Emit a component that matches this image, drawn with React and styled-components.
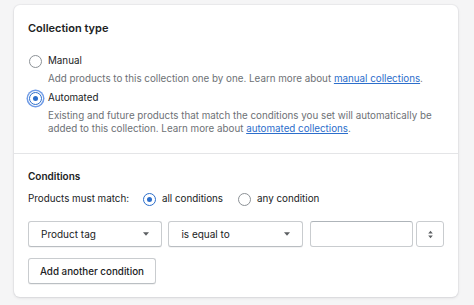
import React from "react";
import styled, { createGlobalStyle } from "styled-components";

const Global = createGlobalStyle`
  html, body { margin: 0; padding: 0; background: #f5f5f6; }
  body { font-family: Inter, "Noto Sans", sans-serif; color: #202223; }
`;

const Page = styled.div`
  width: 474px;
  height: 305px;
  box-sizing: border-box;
  padding: 5px 16px 0 14px;
`;

const Card = styled.div`
  background: #fff;
  border-radius: 6px;
  box-shadow: 0 0 0 1px rgba(63, 63, 68, 0.04), 0 1px 3px 0 rgba(63, 63, 68, 0.14);
  overflow: hidden;
`;

const Section = styled.div`
  padding: ${(p) => p.$pad};
  & + & { border-top: 1px solid #e4e5e7; }
`;

const Heading = styled.h2`
  margin: 0;
  font-size: 11px;
  font-weight: 600;
  line-height: 16px;
`;

const SubHeading = styled.h3`
  margin: 0;
  font-size: 10px;
  font-weight: 600;
  line-height: 16px;
`;

const ChoiceList = styled.div`
  display: flex;
  flex-direction: column;
  gap: 5px;
  margin-top: 17px;
`;

const Choice = styled.label`
  display: flex;
  align-items: center;
  gap: 6px;
  font-size: 9.8px;
  line-height: 16px;
  color: #202223;
`;

const RadioOuter = styled.span`
  box-sizing: border-box;
  width: 13px;
  height: 13px;
  margin-left: 1px;
  border-radius: 50%;
  border: ${(p) => (p.$on ? "1.5px solid #2c6ecb" : "1.2px solid #8c9196")};
  display: inline-flex;
  align-items: center;
  justify-content: center;
  flex: none;
  background: #fff;
  box-shadow: ${(p) => (p.$focus ? "0 0 0 1px #fff, 0 0 0 2.5px #6f9be6" : "none")};
  &::after {
    content: "";
    width: 5px;
    height: 5px;
    border-radius: 50%;
    background: ${(p) => (p.$on ? "#2c6ecb" : "transparent")};
  }
`;

const Help = styled.p`
  margin: 3px 0 0 20px;
  font-size: 9.8px;
  line-height: 13px;
  color: #6d7175;
`;

const Link = styled.a`
  color: #2c6ecb;
  text-decoration: underline;
`;

const MatchRow = styled.div`
  display: flex;
  align-items: center;
  gap: 13px;
  margin-top: 7px;
  font-size: 9.8px;
  line-height: 16px;
  color: #202223;
`;

const Inline = styled.div`
  display: flex;
  align-items: center;
  gap: 14px;
`;

const FieldRow = styled.div`
  display: flex;
  align-items: center;
  gap: 6px;
  margin-top: 14px;
`;

const Select = styled.div`
  box-sizing: border-box;
  width: ${(p) => p.$w}px;
  height: 26px;
  border: 1px solid #c9cccf;
  border-bottom-color: #b9bdc1;
  border-radius: 3px;
  display: flex;
  align-items: center;
  justify-content: space-between;
  padding: 0 12px 0 12px;
  font-size: 10px;
  color: #202223;
  background: #fff;
  box-shadow: 0 1px 0 rgba(22, 29, 37, 0.05);
`;

const Input = styled.div`
  box-sizing: border-box;
  width: ${(p) => p.$w}px;
  height: 26px;
  margin-left: 1px;
  border: 1px solid #c9cccf;
  border-top-color: #aeb4b9;
  border-radius: 3px;
  background: #fff;
`;

const Spinner = styled.div`
  box-sizing: border-box;
  width: 28px;
  height: 26px;
  border: 1px solid #c9cccf;
  border-radius: 3px;
  display: flex;
  align-items: center;
  justify-content: center;
  background: #fff;
  margin-left: -3px;
`;

const Button = styled.button`
  box-sizing: border-box;
  display: block;
  height: 26px;
  margin-top: 11px;
  padding: 0 11px;
  border: 1px solid #c9cccf;
  border-bottom-color: #babfc3;
  border-radius: 3px;
  background: #fff;
  font-family: inherit;
  font-size: 9.8px;
  font-weight: 500;
  color: #202223;
  box-shadow: 0 1px 0 rgba(0, 0, 0, 0.05);
`;

const Caret = () => (
  <svg width="6" height="4" viewBox="0 0 6 4">
    <path d="M0 0.3h6L3 3.7z" fill="#5c5f62" />
  </svg>
);

const UpDown = () => (
  <svg width="5" height="9" viewBox="0 0 5 9">
    <path d="M0.2 3.6L2.5 0.8l2.3 2.8z M0.2 5.4L2.5 8.2l2.3-2.8z" fill="#5c5f62" />
  </svg>
);

export default function App() {
  return (
    <>
      <Global />
      <Page>
        <Card>
          <Section $pad="15px 14px 18px 14px">
            <Heading>Collection type</Heading>
            <ChoiceList>
              <div>
                <Choice>
                  <RadioOuter />
                  Manual
                </Choice>
                <Help>
                  Add products to this collection one by one. Learn more about{" "}
                  <Link>manual collections</Link>.
                </Help>
              </div>
              <div>
                <Choice>
                  <RadioOuter $on $focus />
                  Automated
                </Choice>
                <Help>
                  Existing and future products that match the conditions you set will automatically be
                  <br />
                  added to this collection. Learn more about <Link>automated collections</Link>.
                </Help>
              </div>
            </ChoiceList>
          </Section>
          <Section $pad="14px 14px 13px 14px">
            <SubHeading>Conditions</SubHeading>
            <MatchRow>
              <span>Products must match:</span>
              <Inline>
                <Choice>
                  <RadioOuter $on />
                  all conditions
                </Choice>
                <Choice>
                  <RadioOuter />
                  any condition
                </Choice>
              </Inline>
            </MatchRow>
            <FieldRow>
              <Select $w={135}>
                Product tag
                <Caret />
              </Select>
              <Select $w={135}>
                is equal to
                <Caret />
              </Select>
              <Input $w={104} />
              <Spinner>
                <UpDown />
              </Spinner>
            </FieldRow>
            <Button>Add another condition</Button>
          </Section>
        </Card>
      </Page>
    </>
  );
}
